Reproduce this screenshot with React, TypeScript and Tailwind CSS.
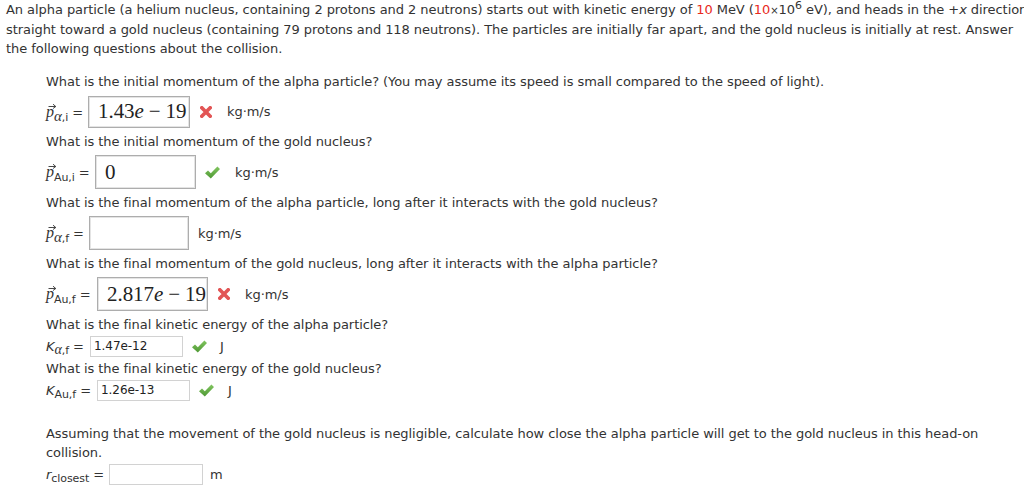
import React from "react";

const sans = { fontFamily: '"DejaVu Sans", Verdana, sans-serif' } as const;
const serif = { fontFamily: '"Liberation Serif", "DejaVu Serif", serif' } as const;

function Check() {
  return (
    <svg width="15" height="13" viewBox="0 0 15 13" className="block">
      <defs>
        <linearGradient id="g" x1="0" y1="0" x2="0" y2="1">
          <stop offset="0" stopColor="#82c660" />
          <stop offset="1" stopColor="#4e9834" />
        </linearGradient>
      </defs>
      <path d="M0 7.2 L3 4.4 L5.8 7.2 L12.4 0.4 L15 2.9 L5.8 12.6 Z" fill="url(#g)" />
    </svg>
  );
}

function Cross() {
  return (
    <svg width="12" height="12" viewBox="0 0 12 12" className="block">
      <path d="M1.8 1.8 L10.2 10.2 M10.2 1.8 L1.8 10.2" stroke="#e25555" strokeWidth="3.6" strokeLinecap="square" />
    </svg>
  );
}

function VecP() {
  return (
    <span className="relative inline-block" style={serif}>
      <span className="italic text-[16px]">p</span>
      <svg width="9" height="6" viewBox="0 0 9 6" className="absolute left-[2px] top-[1px]">
        <path d="M0.5 3.5 L7.5 3.5 M5 1.2 L7.8 3.5 L5 5.5" stroke="#333" strokeWidth="0.9" fill="none" />
      </svg>
    </span>
  );
}

function SubAlpha({ s }: { s: string }) {
  return (
    <sub className="relative top-[4px] align-baseline text-[12px] leading-none">
      <span className="italic text-[15px]" style={serif}>α</span>
      <span className="text-[11px]">,{s}</span>
    </sub>
  );
}

function SubAu({ s }: { s: string }) {
  return (
    <sub className="relative top-[4px] align-baseline text-[11px] leading-none">Au,{s}</sub>
  );
}

function BigBox({ w, h, children }: { w: string; h: string; children?: React.ReactNode }) {
  return (
    <div className={`${w} ${h} shrink-0 border border-[#adadad] bg-white shadow-[inset_0_0_0_1px_#e4e4e4] flex items-center pl-[9px] text-[21px] text-[#222]`} style={serif}>
      {children}
    </div>
  );
}

function SmallBox({ w, children }: { w: string; children?: React.ReactNode }) {
  return (
    <div className={`${w} h-[21px] shrink-0 border border-[#d2d2d2] bg-white flex items-center pl-[3px] text-[12px] text-[#222]`}>
      {children}
    </div>
  );
}

export default function App() {
  return (
    <div className="w-[1024px] h-[490px] overflow-hidden bg-white text-[#333] text-[13px] leading-[19px] tracking-[-0.06px]" style={sans}>
      <div className="pl-[6px] whitespace-nowrap">
        An alpha particle (a helium nucleus, containing 2 protons and 2 neutrons) starts out with kinetic energy of{" "}
        <span className="text-[#e8291c]">10</span> MeV (<span className="text-[#e8291c]">10</span>
        <span className="text-[10px]">×</span>10<sup className="text-[11px]">6</sup> eV), and heads in the +<span className="italic">x</span> direction
        <br />
        straight toward a gold nucleus (containing 79 protons and 118 neutrons). The particles are initially far apart, and the gold nucleus is initially at rest. Answer
        <br />
        the following questions about the collision.
      </div>

      <div className="pl-[46px] mt-[14px] flex flex-col">
        <div className="h-[19px] whitespace-nowrap">What is the initial momentum of the alpha particle? (You may assume its speed is small compared to the speed of light).</div>
        <div className="h-[41px] flex items-center">
          <div className="w-[42px] shrink-0 whitespace-nowrap"><VecP /><SubAlpha s="i" /> =</div>
          <BigBox w="w-[102px]" h="h-[32px]">
            <span>1.43</span><span className="italic">e</span><span className="mx-[5px]">−</span><span>19</span>
          </BigBox>
          <div className="ml-[10px]"><Cross /></div>
          <div className="ml-[15px]">kg·m/s</div>
        </div>

        <div className="h-[19px] whitespace-nowrap">What is the initial momentum of the gold nucleus?</div>
        <div className="h-[42px] flex items-center">
          <div className="w-[49px] shrink-0 whitespace-nowrap"><VecP /><SubAu s="i" /> =</div>
          <BigBox w="w-[101px]" h="h-[34px]"><span>0</span></BigBox>
          <div className="ml-[9px]"><Check /></div>
          <div className="ml-[15px]">kg·m/s</div>
        </div>

        <div className="h-[19px] whitespace-nowrap">What is the final momentum of the alpha particle, long after it interacts with the gold nucleus?</div>
        <div className="h-[42px] flex items-center">
          <div className="w-[43px] shrink-0 whitespace-nowrap"><VecP /><SubAlpha s="f" /> =</div>
          <BigBox w="w-[100px]" h="h-[34px]" />
          <div className="ml-[9px]">kg·m/s</div>
        </div>

        <div className="h-[19px] whitespace-nowrap">What is the final momentum of the gold nucleus, long after it interacts with the alpha particle?</div>
        <div className="h-[42px] flex items-center">
          <div className="w-[51px] shrink-0 whitespace-nowrap"><VecP /><SubAu s="f" /> =</div>
          <BigBox w="w-[111px]" h="h-[34px]">
            <span>2.817</span><span className="italic">e</span><span className="mx-[5px]">−</span><span>19</span>
          </BigBox>
          <div className="ml-[10px]"><Cross /></div>
          <div className="ml-[15px]">kg·m/s</div>
        </div>

        <div className="h-[19px] whitespace-nowrap">What is the final kinetic energy of the alpha particle?</div>
        <div className="h-[25px] flex items-center">
          <div className="w-[44px] shrink-0 whitespace-nowrap">
            <span className="italic">K</span>
            <sub className="relative top-[3px] align-baseline leading-none"><span className="italic text-[14px]" style={serif}>α</span><span className="text-[11px]">,f</span></sub> =
          </div>
          <SmallBox w="w-[93px]">1.47e-12</SmallBox>
          <div className="ml-[9px]"><Check /></div>
          <div className="ml-[13px]">J</div>
        </div>

        <div className="h-[19px] whitespace-nowrap">What is the final kinetic energy of the gold nucleus?</div>
        <div className="h-[25px] flex items-center">
          <div className="w-[51px] shrink-0 whitespace-nowrap">
            <span className="italic">K</span>
            <sub className="relative top-[3px] align-baseline text-[11px] leading-none">Au,f</sub> =
          </div>
          <SmallBox w="w-[93px]">1.26e-13</SmallBox>
          <div className="ml-[9px]"><Check /></div>
          <div className="ml-[14px]">J</div>
        </div>

        <div className="h-[21px]" />
        <div className="whitespace-nowrap">
          Assuming that the movement of the gold nucleus is negligible, calculate how close the alpha particle will get to the gold nucleus in this head-on
          <br />
          collision.
        </div>
        <div className="h-[25px] flex items-center">
          <div className="w-[63px] shrink-0 whitespace-nowrap">
            <span className="italic">r</span>
            <sub className="relative top-[3px] align-baseline text-[11px] leading-none">closest</sub> =
          </div>
          <SmallBox w="w-[94px]" />
          <div className="ml-[7px]">m</div>
        </div>
      </div>
    </div>
  );
}
